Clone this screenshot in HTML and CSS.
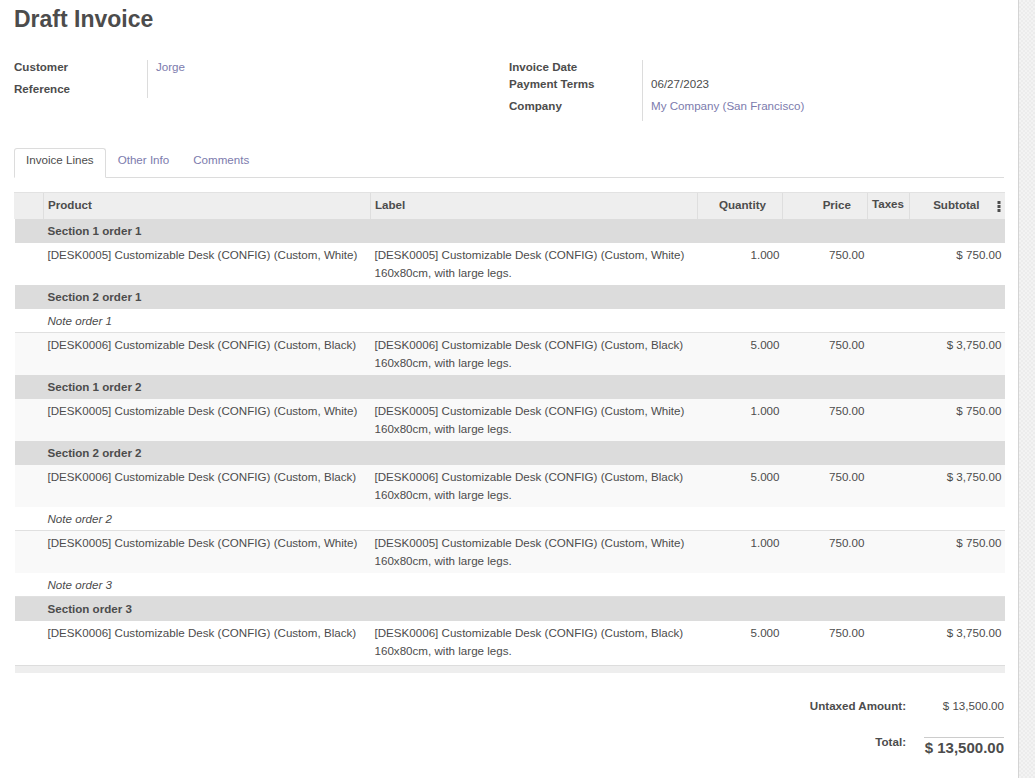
FILE: index.html
```html
<!DOCTYPE html>
<html lang="en">
<head>
    <meta charset="UTF-8">
    <title>Draft Invoice</title>
    <link rel="stylesheet" href="styles.css">
</head>
<body>
    <div class="page">
        <div class="sheet">
            <h1 class="title">Draft Invoice</h1>

            <div class="fields">
                <div class="group group-left">
                    <div class="label">Customer</div>
                    <div class="value"><a class="link">Jorge</a></div>
                    <div class="label">Reference</div>
                    <div class="value"></div>
                </div>
                <div class="group group-right">
                    <div class="label">Invoice Date</div>
                    <div class="value"></div>
                    <div class="label">Payment Terms</div>
                    <div class="value">06/27/2023</div>
                    <div class="label">Company</div>
                    <div class="value"><a class="link">My Company (San Francisco)</a></div>
                </div>
            </div>

            <div class="tabs">
                <div class="tab active">Invoice Lines</div>
                <div class="tab">Other Info</div>
                <div class="tab">Comments</div>
            </div>

            <table class="lines">
                <colgroup>
                    <col class="c-handle">
                    <col class="c-product">
                    <col class="c-label">
                    <col class="c-qty">
                    <col class="c-price">
                    <col class="c-taxes">
                    <col class="c-subtotal">
                </colgroup>
                <thead>
                    <tr>
                        <th></th>
                        <th>Product</th>
                        <th>Label</th>
                        <th class="num">Quantity</th>
                        <th class="num">Price</th>
                        <th class="taxes">Taxes</th>
                        <th class="num subtotal-head">Subtotal
                            <svg class="kebab" width="4" height="11" viewBox="0 0 4 11"><rect x="0.5" y="0" width="3" height="3"/><rect x="0.5" y="4" width="3" height="3"/><rect x="0.5" y="8" width="3" height="3"/></svg>
                        </th>
                    </tr>
                </thead>
                <tbody>
                    <tr class="section"><td></td><td colspan="6">Section 1 order 1</td></tr>
                    <tr class="line">
                        <td></td>
                        <td>[DESK0005] Customizable Desk (CONFIG) (Custom, White)</td>
                        <td>[DESK0005] Customizable Desk (CONFIG) (Custom, White)<br>160x80cm, with large legs.</td>
                        <td class="num">1.000</td>
                        <td class="num">750.00</td>
                        <td></td>
                        <td class="num">$ 750.00</td>
                    </tr>
                    <tr class="section"><td></td><td colspan="6">Section 2 order 1</td></tr>
                    <tr class="note"><td></td><td colspan="6">Note order 1</td></tr>
                    <tr class="line odd">
                        <td></td>
                        <td>[DESK0006] Customizable Desk (CONFIG) (Custom, Black)</td>
                        <td>[DESK0006] Customizable Desk (CONFIG) (Custom, Black)<br>160x80cm, with large legs.</td>
                        <td class="num">5.000</td>
                        <td class="num">750.00</td>
                        <td></td>
                        <td class="num">$ 3,750.00</td>
                    </tr>
                    <tr class="section"><td></td><td colspan="6">Section 1 order 2</td></tr>
                    <tr class="line odd">
                        <td></td>
                        <td>[DESK0005] Customizable Desk (CONFIG) (Custom, White)</td>
                        <td>[DESK0005] Customizable Desk (CONFIG) (Custom, White)<br>160x80cm, with large legs.</td>
                        <td class="num">1.000</td>
                        <td class="num">750.00</td>
                        <td></td>
                        <td class="num">$ 750.00</td>
                    </tr>
                    <tr class="section"><td></td><td colspan="6">Section 2 order 2</td></tr>
                    <tr class="line odd">
                        <td></td>
                        <td>[DESK0006] Customizable Desk (CONFIG) (Custom, Black)</td>
                        <td>[DESK0006] Customizable Desk (CONFIG) (Custom, Black)<br>160x80cm, with large legs.</td>
                        <td class="num">5.000</td>
                        <td class="num">750.00</td>
                        <td></td>
                        <td class="num">$ 3,750.00</td>
                    </tr>
                    <tr class="note"><td></td><td colspan="6">Note order 2</td></tr>
                    <tr class="line odd">
                        <td></td>
                        <td>[DESK0005] Customizable Desk (CONFIG) (Custom, White)</td>
                        <td>[DESK0005] Customizable Desk (CONFIG) (Custom, White)<br>160x80cm, with large legs.</td>
                        <td class="num">1.000</td>
                        <td class="num">750.00</td>
                        <td></td>
                        <td class="num">$ 750.00</td>
                    </tr>
                    <tr class="note"><td></td><td colspan="6">Note order 3</td></tr>
                    <tr class="section"><td></td><td colspan="6">Section order 3</td></tr>
                    <tr class="line last">
                        <td></td>
                        <td>[DESK0006] Customizable Desk (CONFIG) (Custom, Black)</td>
                        <td>[DESK0006] Customizable Desk (CONFIG) (Custom, Black)<br>160x80cm, with large legs.</td>
                        <td class="num">5.000</td>
                        <td class="num">750.00</td>
                        <td></td>
                        <td class="num">$ 3,750.00</td>
                    </tr>
                </tbody>
                <tfoot>
                    <tr><td colspan="7"></td></tr>
                </tfoot>
            </table>

            <div class="totals">
                <div class="total-label">Untaxed Amount:</div>
                <div class="total-value">$ 13,500.00</div>
                <div class="total-label grand-label">Total:</div>
                <div class="total-value grand">$ 13,500.00</div>
            </div>
        </div>
        <div class="side-strip"></div>
    </div>
</body>
</html>
```

FILE: styles.css
```css
* { margin: 0; padding: 0; box-sizing: border-box; }
html, body { height: 100%; }
body {
    font-family: "Liberation Sans", Arial, sans-serif;
    font-size: 11.6px;
    line-height: 18px;
    color: #4c4c4c;
    background: white;
    overflow: hidden;
}
.page {
    display: flex;
    height: 100%;
}
.sheet {
    width: 1018px;
    flex-shrink: 0;
    padding: 6px 14px 0 14px;
}
.side-strip {
    flex: 1;
    border-left: 1px solid #d4d4d4;
    background-color: #f3f3f3;
    background-image:
        linear-gradient(45deg, #ececec 25%, transparent 25%, transparent 75%, #ececec 75%),
        linear-gradient(45deg, #ececec 25%, transparent 25%, transparent 75%, #ececec 75%);
    background-size: 4px 4px;
    background-position: 0 0, 2px 2px;
}
.title {
    font-size: 23px;
    line-height: 26px;
    font-weight: bold;
    color: #4c4c4c;
}
.link {
    color: #7c7bad;
    text-decoration: none;
}

/* header fields */
.fields {
    display: grid;
    grid-template-columns: 495px 495px;
    margin-top: 28px;
}
.group {
    display: grid;
    grid-template-columns: 133px 1fr;
}
.group .label {
    font-weight: bold;
    line-height: 14px;
}
.group .value {
    border-left: 1px solid #dcdcdc;
    padding-left: 8px;
    line-height: 14px;
}
.group-left { grid-template-rows: 22px 16px; }
.group-right { grid-template-rows: 17px 22px 22px; }

/* tabs */
.tabs {
    display: flex;
    margin-top: 27px;
    border-bottom: 1px solid #dcdcdc;
    height: 30px;
}
.tab {
    padding: 2px 11px 0 11px;
    line-height: 18px;
    color: #7c7bad;
    border: 1px solid transparent;
    border-radius: 3px 3px 0 0;
}
.tab.active {
    color: #4c4c4c;
    border-color: #dcdcdc;
    border-bottom-color: white;
    background: white;
    height: 30px;
}

/* lines table */
.lines {
    width: 990px;
    margin-top: 14px;
    border-collapse: collapse;
    table-layout: fixed;
}
.c-handle { width: 29px; }
.c-product { width: 327px; }
.c-label { width: 327px; }
.c-qty { width: 85px; }
.c-price { width: 85px; }
.c-taxes { width: 42px; }
.c-subtotal { width: 95px; }
.lines th {
    background: #eeeeee;
    border-top: 1px solid #e2e2e2;
    border-left: 1px solid #dedede;
    text-align: left;
    font-weight: bold;
    padding: 3px 4px 4px 4px;
    height: 26px;
    white-space: nowrap;
}
.lines th:first-child { border-left: 1px solid #eeeeee; }
.lines th.num {
    text-align: right;
    padding-right: 16px;
}
.lines th.taxes {
    vertical-align: top;
    padding-top: 2px;
}
.lines th.subtotal-head {
    position: relative;
    padding-right: 25px;
}
.kebab {
    position: absolute;
    right: 4px;
    top: 8px;
    fill: #4c4c4c;
}
.lines td {
    padding: 3px 4px;
    vertical-align: top;
    line-height: 18px;
}
.lines td.num {
    text-align: right;
    padding-right: 3px;
}
.lines tr.section td {
    background: #dcdcdc;
    font-weight: bold;
}
.lines tr.line.odd td { background: #f9f9f9; }
.lines tr.line.last td { padding-bottom: 5px; }
.lines tr.note td {
    font-style: italic;
    padding-bottom: 2px;
    border-bottom: 1px solid #e0e0e0;
}
.lines tfoot td {
    height: 8px;
    padding: 0;
    background: #eeeeee;
    border-top: 1px solid #dddddd;
}

/* totals */
.totals {
    display: grid;
    grid-template-columns: auto 80px;
    column-gap: 18px;
    justify-content: end;
    margin-top: 24px;
}
.total-label {
    font-weight: bold;
    text-align: right;
}
.total-value {
    text-align: right;
}
.grand-label {
    margin-top: 18px;
}
.grand {
    margin-top: 22px;
    border-top: 1px solid #cccccc;
    font-size: 15px;
    font-weight: bold;
    line-height: 20px;
}
```
